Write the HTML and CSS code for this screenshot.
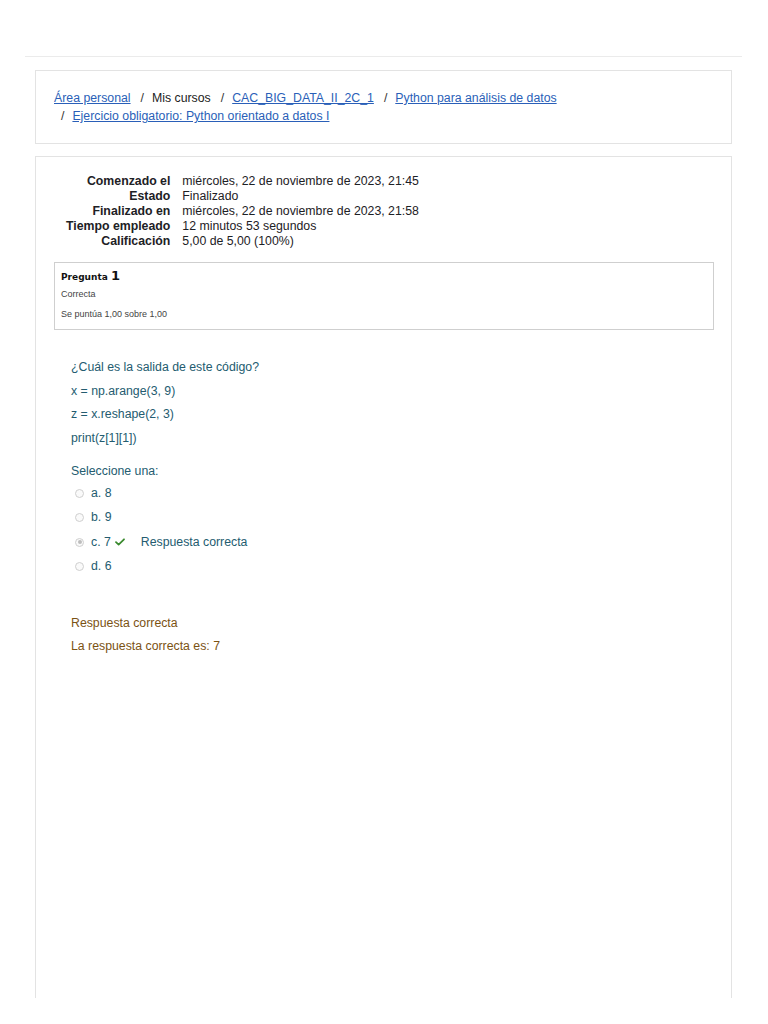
FILE: index.html
```html
<!DOCTYPE html>
<html lang="es">
<head>
<meta charset="utf-8">
<title>Ejercicio obligatorio: Python orientado a datos I</title>
<link rel="stylesheet" href="styles.css">
</head>
<body>
<div class="page">
  <div class="topline"></div>
  <div class="card crumbs">
    <nav class="breadcrumb">
      <a href="#">Área personal</a><span class="sep">/</span><span class="plain">Mis cursos</span><span class="sep">/</span><a href="#">CAC_BIG_DATA_II_2C_1</a><span class="sep">/</span><a href="#">Python para análisis de datos</a><br><span class="sep first">/</span><a href="#">Ejercicio obligatorio: Python orientado a datos I</a>
    </nav>
  </div>
  <div class="card main">
    <table class="summary">
      <tr><th>Comenzado el</th><td>miércoles, 22 de noviembre de 2023, 21:45</td></tr>
      <tr><th>Estado</th><td>Finalizado</td></tr>
      <tr><th>Finalizado en</th><td>miércoles, 22 de noviembre de 2023, 21:58</td></tr>
      <tr><th>Tiempo empleado</th><td>12 minutos 53 segundos</td></tr>
      <tr><th>Calificación</th><td>5,00 de 5,00 (100%)</td></tr>
    </table>
    <div class="qinfo">
      <div class="qno">Pregunta <span class="num">1</span></div>
      <div class="qstate">Correcta</div>
      <div class="qgrade">Se puntúa 1,00 sobre 1,00</div>
    </div>
    <div class="qtext">
      <p>¿Cuál es la salida de este código?</p>
      <p>x = np.arange(3, 9)</p>
      <p>z = x.reshape(2, 3)</p>
      <p>print(z[1][1])</p>
    </div>
    <div class="answer">
      <div class="prompt">Seleccione una:</div>
      <div class="opt"><span class="radio"></span>a. 8</div>
      <div class="opt"><span class="radio"></span>b. 9</div>
      <div class="opt"><span class="radio checked"></span>c. 7<svg class="tick" viewBox="0 0 12 10" width="10" height="8"><path d="M1 5.2 L4.3 8.3 L11 1.6" fill="none" stroke="#3a8a2e" stroke-width="2.2" stroke-linecap="round" stroke-linejoin="round"/></svg><span class="fb">Respuesta correcta</span></div>
      <div class="opt"><span class="radio"></span>d. 6</div>
    </div>
    <div class="outcome">
      <p>Respuesta correcta</p>
      <p>La respuesta correcta es: 7</p>
    </div>
  </div>
</div>
</body>
</html>
```
FILE: styles.css
```css
html, body {
  margin: 0;
  padding: 0;
  background: #ffffff;
}
body {
  font-family: "Liberation Sans", Arial, sans-serif;
  font-size: 12.3px;
  color: #1d2125;
}
.page {
  padding-top: 56px;
}
.topline {
  height: 1px;
  background: #ebebeb;
  margin: 0 26px 0 25px;
}
.card {
  border: 1px solid #e3e3e3;
  margin: 0 36px 0 35px;
}
.crumbs {
  margin-top: 13px;
  height: 74px;
  box-sizing: border-box;
  padding: 18px 18px 0 18px;
}
.breadcrumb {
  line-height: 18px;
  color: #222;
}
.breadcrumb a {
  color: #2a5fb8;
  text-decoration: underline;
}
.breadcrumb .sep {
  margin: 0 8px 0 10px;
  color: #333;
}
.breadcrumb .sep.first {
  margin-left: 7px;
}
.main {
  margin-top: 12px;
  border-bottom: none;
  height: 842px;
  box-sizing: border-box;
  padding: 17px 17px 0 18px;
}
.summary {
  border-collapse: collapse;
  margin-left: 12px;
}
.summary th {
  text-align: right;
  font-weight: bold;
  padding: 0 12px 0 0;
  line-height: 15px;
  color: #1d2125;
  white-space: nowrap;
}
.summary td {
  padding: 0;
  line-height: 15px;
  color: #1d2125;
}
.qinfo {
  margin-top: 13px;
  border: 1px solid #cfcfcf;
  height: 68px;
  box-sizing: border-box;
  padding: 5px 6px 0 6px;
}
.qno {
  font-family: "DejaVu Sans", sans-serif;
  font-size: 9px;
  font-weight: bold;
  color: #111;
  line-height: 16px;
}
.qno .num {
  font-size: 13px;
}
.qstate {
  font-size: 9px;
  color: #444;
  margin-top: 3px;
  line-height: 12px;
}
.qgrade {
  font-size: 9px;
  color: #444;
  margin-top: 8px;
  line-height: 12px;
}
.qtext {
  margin-top: 30px;
  padding-left: 17px;
  color: #245c70;
}
.qtext p {
  margin: 0 0 8.6px 0;
  line-height: 15px;
}
.answer {
  margin-top: 18px;
  padding-left: 17px;
  color: #245c70;
}
.prompt {
  line-height: 15px;
  margin-bottom: 7px;
}
.opt {
  display: flex;
  align-items: center;
  height: 15px;
  line-height: 15px;
  margin-bottom: 9.5px;
  padding-left: 4px;
}
.radio {
  width: 7px;
  height: 7px;
  border: 1px solid #cfcfcf;
  border-radius: 50%;
  background: #fafafa;
  margin-right: 7px;
  box-sizing: content-box;
  position: relative;
}
.radio.checked::after {
  content: "";
  position: absolute;
  left: 1.5px;
  top: 1.5px;
  width: 4px;
  height: 4px;
  border-radius: 50%;
  background: #bdbdbd;
}
.tick {
  margin-left: 4px;
  margin-right: 16px;
}
.fb {
  color: #245c70;
}
.outcome {
  margin-top: 42px;
  padding-left: 17px;
  color: #7b5314;
}
.outcome p {
  margin: 0 0 8px 0;
  line-height: 15px;
}
```
